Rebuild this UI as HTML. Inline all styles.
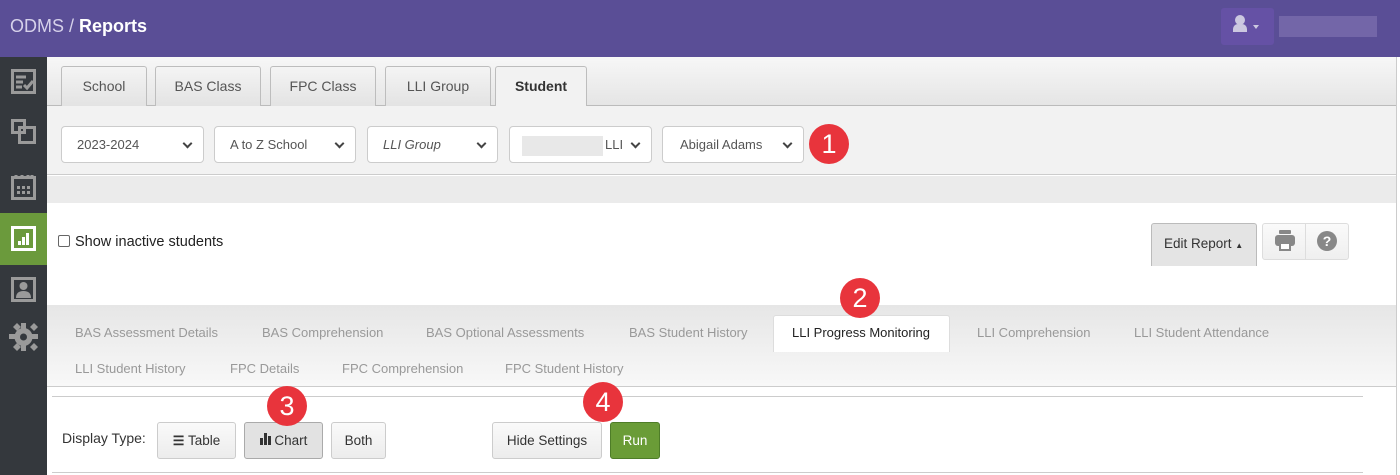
<!DOCTYPE html>
<html><head><style>
*{box-sizing:border-box;margin:0;padding:0}
body{width:1400px;height:475px;overflow:hidden;font-family:"Liberation Sans",sans-serif;background:#fff;position:relative;font-size:13px;color:#333}
.a{position:absolute}
.hdr{left:0;top:0;width:1400px;height:57px;background:#5a4e96}
.side{left:0;top:57px;width:47px;height:418px;background:#34383d}
.tab{position:absolute;top:66px;height:40px;border:1px solid #bdbdbd;border-bottom:none;border-radius:3px 3px 0 0;background:linear-gradient(#f4f4f4,#e3e3e3);font-size:14px;color:#555;text-align:center;line-height:38px}
.sel{position:absolute;top:126px;height:37px;border:1px solid #ccc;border-radius:4px;background:#fff;font-size:13px;color:#555;line-height:35px;padding-left:15px}
.sel:after{content:"";position:absolute;right:12px;top:13px;width:5px;height:5px;border-right:2px solid #444;border-bottom:2px solid #444;transform:rotate(45deg)}
.st{position:absolute;font-size:13px;color:#999}
.btn{position:absolute;top:422px;height:37px;border:1px solid #ccc;border-radius:3px;background:linear-gradient(#fafafa,#ececec);font-size:13.5px;color:#333;line-height:35px;text-align:center}
.c{position:absolute;width:40px;height:40px;border-radius:50%;background:#e8343c;color:#fff;font-size:27px;text-align:center;line-height:40px}
</style></head><body>
<div class="a hdr"></div>
<div class="a" style="left:10px;top:16px;font-size:18px;color:#d6d1ea">ODMS / <span style="color:#fff;font-weight:bold">Reports</span></div>
<div class="a" style="left:1221px;top:8px;width:53px;height:37px;background:#6551a5;border-radius:3px"></div>
<div class="a" style="left:1235px;top:15px;width:10px;height:10px;border-radius:50%;background:#ccc8e0"></div>
<div class="a" style="left:1233px;top:24px;width:14px;height:8px;border-radius:5px 5px 0 0;background:#ccc8e0"></div>
<div class="a" style="left:1253px;top:25px;border:3px solid transparent;border-top:4px solid #ccc8e0"></div>
<div class="a" style="left:1279px;top:16px;width:98px;height:21px;background:#7366a8"></div>

<div class="a side"></div>
<div class="a" style="left:0;top:213px;width:47px;height:52px;background:#6b9a3c"></div>
<svg class="a" style="left:0;top:57px" width="47" height="300" viewBox="0 57 47 300">
<g fill="none" stroke="#9a9a9a" stroke-width="3">
<rect x="12.5" y="70.5" width="22" height="22"/>
<path d="M16 77h10M16 82h7M16 87h6M24 85l3 3 6-7"/>
<rect x="12.5" y="120.5" width="12" height="12"/>
<rect x="19.5" y="127.5" width="15" height="15"/>
<rect x="12.5" y="177.5" width="22" height="21"/>
<path d="M16 175v4M22 175v4M28 175v4M32 175v4"/>
<rect x="12.5" y="278.5" width="22" height="22"/>
</g>
<g fill="#9a9a9a">
<rect x="17" y="186" width="3" height="3"/><rect x="22" y="186" width="3" height="3"/><rect x="27" y="186" width="3" height="3"/>
<rect x="17" y="191" width="3" height="3"/><rect x="22" y="191" width="3" height="3"/><rect x="27" y="191" width="3" height="3"/>
<circle cx="23.5" cy="286" r="4"/><path d="M16 298q0-7 7.5-7t7.5 7z"/>
<circle cx="23.5" cy="337" r="9"/>
<path d="M21 323h5v6h-5zM21 345h5v6h-5zM9 334h6v5H9zM32 334h6v5h-6zM13 327l4-4 4 4-4 4zM30 327l4-4 4 4-4 4zM13 347l4-4 4 4-4 4zM30 347l4-4 4 4-4 4z"/>
</g>
<circle cx="23.5" cy="337" r="3.5" fill="#34383d"/>
<g fill="none" stroke="#fff" stroke-width="3"><rect x="12.5" y="227.5" width="22" height="22"/></g>
<g fill="#fff"><rect x="18" y="241" width="3" height="4"/><rect x="22" y="237" width="3" height="8"/><rect x="26" y="233" width="3" height="12"/></g>
</svg>

<div class="a" style="left:47px;top:57px;width:1350px;height:49px;background:linear-gradient(#f7f7f7,#e5e5e5);border-bottom:1px solid #bbb"></div>
<div class="tab" style="left:61px;width:86px">School</div>
<div class="tab" style="left:155px;width:106px">BAS Class</div>
<div class="tab" style="left:270px;width:106px">FPC Class</div>
<div class="tab" style="left:385px;width:106px">LLI Group</div>
<div class="tab" style="left:495px;width:92px;background:#f2f2f2;height:41px;font-weight:bold;color:#333">Student</div>
<div class="a" style="left:47px;top:106px;width:1350px;height:69px;background:#f2f2f2;border-bottom:1px solid #ccc"></div>
<div class="a" style="left:1396px;top:57px;width:1px;height:418px;background:#ccc"></div>
<div class="sel" style="left:61px;width:143px">2023-2024</div>
<div class="sel" style="left:214px;width:142px">A to Z School</div>
<div class="sel" style="left:367px;width:131px;font-style:italic">LLI Group</div>
<div class="sel" style="left:509px;width:143px;padding-left:95px"><span class="a" style="left:12px;top:9px;width:81px;height:20px;background:#e8e8e8"></span>LLI</div>
<div class="sel" style="left:662px;width:142px;padding-left:17px">Abigail Adams</div>
<div class="c" style="left:809px;top:124px">1</div>
<div class="a" style="left:47px;top:176px;width:1349px;height:27px;background:#ebebeb"></div>

<div class="a" style="left:58px;top:235px;width:12px;height:12px;border:1px solid #666;border-radius:2px;background:#fff"></div>
<div class="a" style="left:75px;top:234px;font-size:14.5px;color:#222">Show inactive students</div>
<div class="a" style="left:1151px;top:223px;width:106px;height:43px;background:#e4e4e4;border:1px solid #bbb;border-bottom:none;border-radius:3px 3px 0 0;font-size:13.5px;line-height:40px;padding-left:12px">Edit Report <span style="font-size:8px">▲</span></div>
<div class="a" style="left:1262px;top:223px;width:87px;height:37px;border:1px solid #ddd;border-radius:3px;background:linear-gradient(#fafafa,#efefef)"></div>
<div class="a" style="left:1305px;top:223px;width:1px;height:37px;background:#ddd"></div>
<div class="a" style="left:1279px;top:230px;width:12px;height:4px;background:#888;border-radius:1px"></div>
<div class="a" style="left:1275px;top:235px;width:20px;height:11px;background:#888;border-radius:3px"></div>
<div class="a" style="left:1279px;top:242px;width:12px;height:9px;background:#fff;border:2px solid #888"></div>
<div class="a" style="left:1317px;top:231px;width:20px;height:20px;border-radius:50%;background:#888;color:#fff;font-weight:bold;font-size:14px;text-align:center;line-height:20px">?</div>

<div class="a" style="left:47px;top:305px;width:1349px;height:82px;background:linear-gradient(#e6e6e6,#f8f8f8);border-bottom:1px solid #ccc"></div>
<div class="st" style="left:75px;top:325px">BAS Assessment Details</div>
<div class="st" style="left:262px;top:325px">BAS Comprehension</div>
<div class="st" style="left:426px;top:325px">BAS Optional Assessments</div>
<div class="st" style="left:629px;top:325px">BAS Student History</div>
<div class="a" style="left:773px;top:315px;width:177px;height:37px;background:#fff;border:1px solid #ddd;border-bottom:none;border-radius:3px 3px 0 0"></div>
<div class="st" style="left:792px;top:325px;color:#222">LLI Progress Monitoring</div>
<div class="st" style="left:977px;top:325px">LLI Comprehension</div>
<div class="st" style="left:1134px;top:325px">LLI Student Attendance</div>
<div class="st" style="left:75px;top:361px">LLI Student History</div>
<div class="st" style="left:230px;top:361px">FPC Details</div>
<div class="st" style="left:342px;top:361px">FPC Comprehension</div>
<div class="st" style="left:505px;top:361px">FPC Student History</div>
<div class="c" style="left:840px;top:278px">2</div>

<div class="a" style="left:52px;top:396px;width:1311px;height:1px;background:#ccc"></div>
<div class="a" style="left:62px;top:430px;font-size:14px">Display Type:</div>
<div class="btn" style="left:157px;width:79px"><b style="font-size:13px">☰</b> Table</div>
<div class="btn" style="left:244px;width:79px;background:#e2e2e2;border-color:#aaa"><span style="display:inline-block;width:3px;height:7px;background:#333"></span><span style="display:inline-block;width:3px;height:12px;background:#333;margin-left:1px"></span><span style="display:inline-block;width:3px;height:9px;background:#333;margin-left:1px"></span> Chart</div>
<div class="btn" style="left:331px;width:55px">Both</div>
<div class="btn" style="left:492px;width:110px">Hide Settings</div>
<div class="btn" style="left:610px;width:50px;background:#6a9c37;border-color:#4e7d28;color:#fff">Run</div>
<div class="c" style="left:267px;top:386px">3</div>
<div class="c" style="left:583px;top:382px">4</div>
<div class="a" style="left:52px;top:472px;width:1311px;height:1px;background:#ccc"></div>
</body></html>
